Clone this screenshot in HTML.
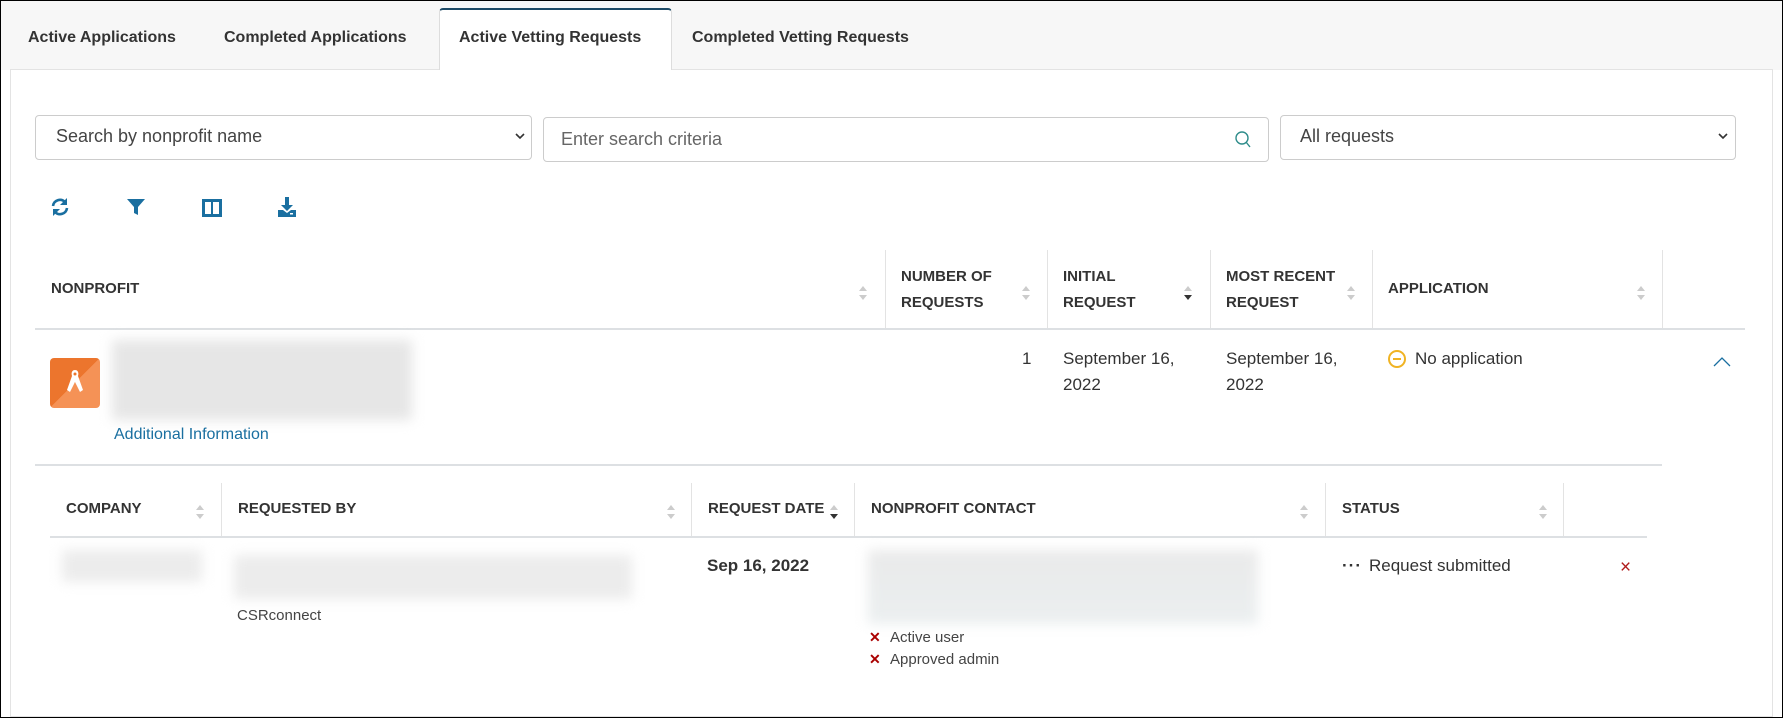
<!DOCTYPE html>
<html><head><meta charset="utf-8"><style>
*{box-sizing:border-box;margin:0;padding:0}
html,body{width:1783px;height:718px;overflow:hidden}
body{background:#fff;font-family:"Liberation Sans",sans-serif;color:#333;position:relative}
.a{position:absolute;white-space:nowrap}
.frame{position:absolute;left:0;top:0;width:1783px;height:718px;border:1px solid #000;z-index:10;pointer-events:none}
.tabbar{left:1px;top:1px;width:1781px;height:69px;background:#f7f7f7}
.tab{font-size:16px;font-weight:bold;color:#333;top:29px}
.panel{left:10px;top:69px;width:1763px;height:648px;border:1px solid #e3e3e3;background:#fff}
.box{border:1px solid #ccc;border-radius:4px;background:#fff}
.ph{font-size:18px;color:#555}
.th{font-size:15px;font-weight:bold;color:#333;line-height:26px}
.sep{width:1px;background:#e3e3e3}
.sort{width:8px;height:16px}
.sort:before{content:"";position:absolute;left:0;top:0;border-left:4px solid transparent;border-right:4px solid transparent;border-bottom:5px solid #ccc}
.sort:after{content:"";position:absolute;left:0;top:9px;border-left:4px solid transparent;border-right:4px solid transparent;border-top:5px solid #ccc}
.sort.d:after{border-top-color:#333}
.td{font-size:17px;color:#333;line-height:26px}
.blur{background:#ececec;filter:blur(6px)}
</style></head><body>
<div class="a tabbar"></div>
<div class="a panel"></div>
<div class="a" style="left:439px;top:8px;width:233px;height:62px;background:#fff;border:1px solid #ddd;border-top:2px solid #1d4a66;border-bottom:none;border-radius:4px 4px 0 0"></div>
<div class="a tab" style="left:28px">Active Applications</div>
<div class="a tab" style="left:224px">Completed Applications</div>
<div class="a tab" style="left:459px">Active Vetting Requests</div>
<div class="a tab" style="left:692px">Completed Vetting Requests</div>

<div class="a box" style="left:35px;top:115px;width:497px;height:45px"></div>
<div class="a ph" style="left:56px;top:126px;color:#444">Search by nonprofit name</div>
<svg class="a" style="left:515px;top:133px" width="10" height="8"><path d="M1 1l4 4 4-4" fill="none" stroke="#333" stroke-width="1.6"/></svg>
<div class="a box" style="left:543px;top:117px;width:726px;height:45px"></div>
<div class="a ph" style="left:561px;top:129px;color:#666">Enter search criteria</div>
<svg class="a" style="left:1234px;top:130px" width="18" height="20"><circle cx="8" cy="8" r="6" fill="none" stroke="#2e8c8a" stroke-width="1.4"/><path d="M12 12l4 5" stroke="#2e8c8a" stroke-width="1.4"/></svg>
<div class="a box" style="left:1280px;top:115px;width:456px;height:45px"></div>
<div class="a ph" style="left:1300px;top:126px;color:#444">All requests</div>
<svg class="a" style="left:1718px;top:133px" width="10" height="8"><path d="M1 1l4 4 4-4" fill="none" stroke="#333" stroke-width="1.6"/></svg>

<svg class="a" style="left:50px;top:197px" width="20" height="20" viewBox="0 0 20 20"><path d="M3 9a7 7 0 0 1 12-4" fill="none" stroke="#1a6fa0" stroke-width="2.6"/><path d="M17 1v7h-7z" fill="#1a6fa0"/><path d="M17 11a7 7 0 0 1-12 4" fill="none" stroke="#1a6fa0" stroke-width="2.6"/><path d="M3 19v-7h7z" fill="#1a6fa0"/></svg>
<svg class="a" style="left:126px;top:197px" width="20" height="20" viewBox="0 0 20 20"><path d="M1 2h18l-7 8v8l-4-2v-6z" fill="#1a6fa0"/></svg>
<svg class="a" style="left:202px;top:199px" width="20" height="18" viewBox="0 0 20 18"><rect x="1.5" y="1.5" width="17" height="15" fill="none" stroke="#1a6fa0" stroke-width="3"/><rect x="9" y="2" width="2" height="14" fill="#1a6fa0"/></svg>
<svg class="a" style="left:277px;top:196px" width="20" height="22" viewBox="0 0 20 22"><path d="M8 1h4v8h4l-6 6-6-6h4z" fill="#1a6fa0"/><path d="M1 14h5l4 3 4-3h5v7H1z" fill="#1a6fa0"/><rect x="13" y="17" width="3" height="1.5" fill="#fff"/></svg>

<div class="a" style="left:35px;top:328px;width:1710px;height:2px;background:#dde0e3"></div>
<div class="a sep" style="left:885px;top:250px;height:78px"></div>
<div class="a sep" style="left:1047px;top:250px;height:78px"></div>
<div class="a sep" style="left:1210px;top:250px;height:78px"></div>
<div class="a sep" style="left:1372px;top:250px;height:78px"></div>
<div class="a sep" style="left:1662px;top:250px;height:78px"></div>
<div class="a th" style="left:51px;top:276px">NONPROFIT</div>
<div class="a th" style="left:901px;top:264px">NUMBER OF<br>REQUESTS</div>
<div class="a th" style="left:1063px;top:264px">INITIAL<br>REQUEST</div>
<div class="a th" style="left:1226px;top:264px">MOST RECENT<br>REQUEST</div>
<div class="a th" style="left:1388px;top:276px">APPLICATION</div>
<div class="a sort" style="left:859px;top:286px"></div>
<div class="a sort" style="left:1022px;top:286px"></div>
<div class="a sort d" style="left:1184px;top:286px"></div>
<div class="a sort" style="left:1347px;top:286px"></div>
<div class="a sort" style="left:1637px;top:286px"></div>

<div class="a" style="left:50px;top:358px;width:50px;height:50px;border-radius:4px;background:linear-gradient(135deg,#ec752d 50%,#f59256 50%)"></div>
<svg class="a" style="left:64px;top:368px" width="22" height="30" viewBox="0 0 22 30"><path d="M11 2c-3 0-4 3-3 6l-5 14 3 2 5-10 5 10 3-2-5-14c1-3 0-6-3-6z" fill="#fff"/><circle cx="11" cy="6" r="1.5" fill="#ec752d"/></svg>
<div class="a blur" style="left:112px;top:340px;width:300px;height:80px;background:#e6e6e6"></div>
<div class="a" style="left:114px;top:426px;font-size:16px;color:#1a6fa0">Additional Information</div>
<div class="a td" style="left:1022px;top:346px">1</div>
<div class="a td" style="left:1063px;top:346px">September 16,<br>2022</div>
<div class="a td" style="left:1226px;top:346px">September 16,<br>2022</div>
<svg class="a" style="left:1387px;top:349px" width="20" height="20"><circle cx="10" cy="10" r="8" fill="none" stroke="#f0b323" stroke-width="2"/><path d="M6 10h8" stroke="#f0b323" stroke-width="2"/></svg>
<div class="a td" style="left:1415px;top:346px">No application</div>
<svg class="a" style="left:1713px;top:356px" width="18" height="12"><path d="M1 10l8-8 8 8" fill="none" stroke="#1a6fa0" stroke-width="1.3"/></svg>
<div class="a" style="left:35px;top:464px;width:1627px;height:2px;background:#dde0e3"></div>

<div class="a" style="left:50px;top:536px;width:1597px;height:2px;background:#dde0e3"></div>
<div class="a sep" style="left:221px;top:483px;height:53px"></div>
<div class="a sep" style="left:691px;top:483px;height:53px"></div>
<div class="a sep" style="left:854px;top:483px;height:53px"></div>
<div class="a sep" style="left:1325px;top:483px;height:53px"></div>
<div class="a sep" style="left:1563px;top:483px;height:53px"></div>
<div class="a th" style="left:66px;top:496px">COMPANY</div>
<div class="a th" style="left:238px;top:496px">REQUESTED BY</div>
<div class="a th" style="left:708px;top:496px">REQUEST DATE</div>
<div class="a th" style="left:871px;top:496px">NONPROFIT CONTACT</div>
<div class="a th" style="left:1342px;top:496px">STATUS</div>
<div class="a sort" style="left:196px;top:505px"></div>
<div class="a sort" style="left:667px;top:505px"></div>
<div class="a sort d" style="left:830px;top:505px"></div>
<div class="a sort" style="left:1300px;top:505px"></div>
<div class="a sort" style="left:1539px;top:505px"></div>

<div class="a blur" style="left:62px;top:550px;width:140px;height:32px"></div>
<div class="a blur" style="left:234px;top:555px;width:398px;height:44px"></div>
<div class="a" style="left:237px;top:607px;font-size:15px;color:#444">CSRconnect</div>
<div class="a td" style="left:707px;top:553px;font-weight:bold">Sep 16, 2022</div>
<div class="a blur" style="left:868px;top:550px;width:390px;height:74px;background:linear-gradient(#eaeaea,#ebeff0)"></div>
<div class="a" style="left:869px;top:629px;font-size:14px;color:#a00;font-weight:bold">✕</div>
<div class="a" style="left:890px;top:629px;font-size:15px;color:#444">Active user</div>
<div class="a" style="left:869px;top:651px;font-size:14px;color:#a00;font-weight:bold">✕</div>
<div class="a" style="left:890px;top:651px;font-size:15px;color:#444">Approved admin</div>
<div class="a td" style="left:1342px;top:553px;font-weight:bold;letter-spacing:1px">···</div>
<div class="a td" style="left:1369px;top:553px">Request submitted</div>
<div class="a" style="left:1620px;top:557px;font-size:19px;color:#b01c1c">×</div>
<div class="frame"></div>
</body></html>
